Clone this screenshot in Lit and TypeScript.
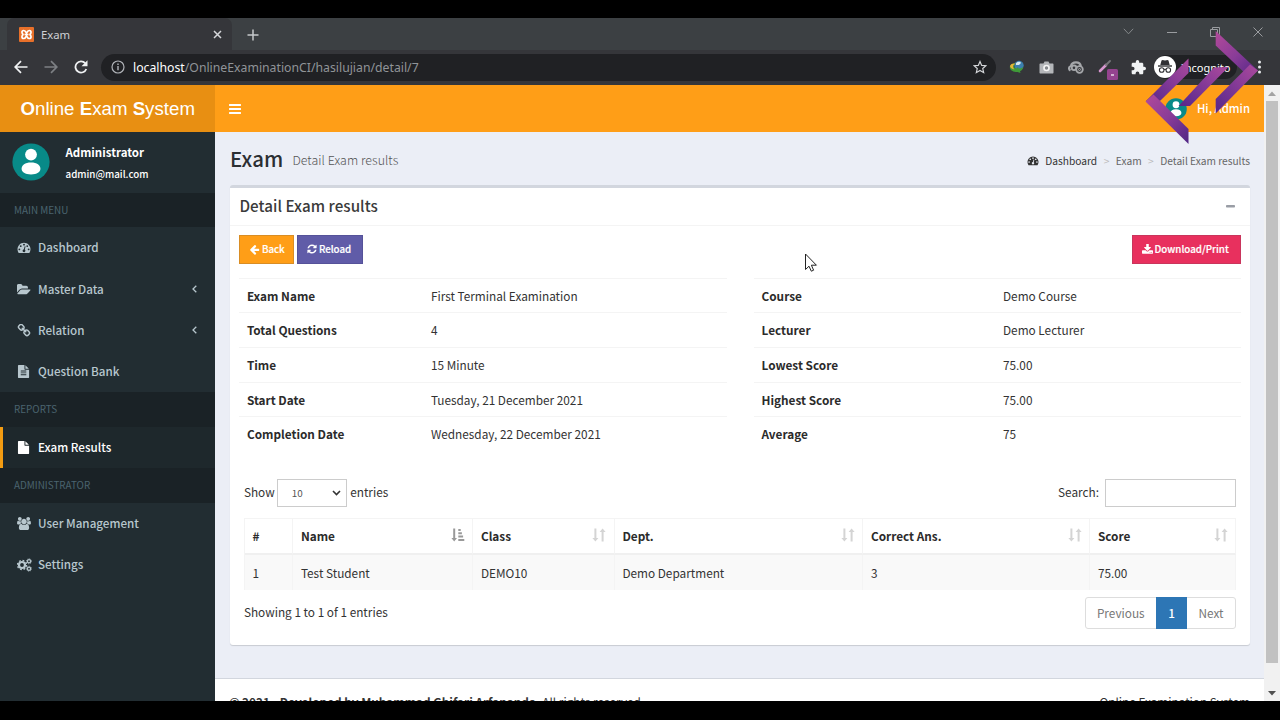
import { LitElement, html, css, svg } from 'lit';
import { customElement } from 'lit/decorators.js';
import { classMap } from 'lit/directives/class-map.js';

const ICONS: Record<string, { box: string; d: string }> = {
  bars: { box: '0 0 1792 1792', d: 'M1664 1344v128q0 26-19 45t-45 19h-1408q-26 0-45-19t-19-45v-128q0-26 19-45t45-19h1408q26 0 45 19t19 45zm0-512v128q0 26-19 45t-45 19h-1408q-26 0-45-19t-19-45v-128q0-26 19-45t45-19h1408q26 0 45 19t19 45zm0-512v128q0 26-19 45t-45 19h-1408q-26 0-45-19t-19-45v-128q0-26 19-45t45-19h1408q26 0 45 19t19 45z' },
  gauge: { box: '0 0 1792 1792', d: 'M384 1152q0-53-37.5-90.5t-90.5-37.5-90.5 37.5-37.5 90.5 37.5 90.5 90.5 37.5 90.5-37.5 37.5-90.5zm192-448q0-53-37.5-90.5t-90.5-37.5-90.5 37.5-37.5 90.5 37.5 90.5 90.5 37.5 90.5-37.5 37.5-90.5zm428 481l101-382q6-26-7.5-48.5t-38.5-29.5-48 6.5-30 39.5l-101 382q-60 5-107 43.5t-63 98.5q-20 77 20 146t117 89 146-20 89-117q16-60-6-117t-72-91zm660-33q0-53-37.5-90.5t-90.5-37.5-90.5 37.5-37.5 90.5 37.5 90.5 90.5 37.5 90.5-37.5 37.5-90.5zm-640-640q0-53-37.5-90.5t-90.5-37.5-90.5 37.5-37.5 90.5 37.5 90.5 90.5 37.5 90.5-37.5 37.5-90.5zm448 192q0-53-37.5-90.5t-90.5-37.5-90.5 37.5-37.5 90.5 37.5 90.5 90.5 37.5 90.5-37.5 37.5-90.5zm320 448q0 261-141 483-19 29-54 29h-1402q-35 0-54-29-141-221-141-483 0-182 71-348t191-286 286-191 348-71 348 71 286 191 191 286 71 348z' },
  folder: { box: '0 0 1856 1792', d: 'M1815 952q0 31-31 66l-336 396q-43 51-120.5 86.5t-143.5 35.5h-1088q-34 0-60.5-13t-26.5-43q0-31 31-66l336-396q43-51 120.5-86.5t143.5-35.5h1088q34 0 60.5 13t26.5 43zm-343-344v160h-832q-94 0-197 47.5t-164 119.5l-337 396-5 6q0-4-.5-12.5t-.5-12.5v-960q0-92 66-158t158-66h320q92 0 158 66t66 158v32h544q92 0 158 66t66 158z' },
  link: { box: '64 64 1664 1664', d: 'M1520 1216q0-40-28-68l-208-208q-28-28-68-28-42 0-72 32 3 3 19 18.5t21.5 21.5 15 19 13 25.5 3.5 27.5q0 40-28 68t-68 28q-15 0-27.5-3.5t-25.5-13-19-15-21.5-21.5-18.5-19q-33 31-33 73 0 40 28 68l206 207q27 27 68 27 40 0 68-26l147-146q28-28 28-67zm-703-705q0-40-28-68l-206-207q-28-28-68-28-39 0-68 27l-147 146q-28 28-28 67 0 40 28 68l208 208q27 27 68 27 42 0 72-31-3-3-19-18.5t-21.5-21.5-15-19-13-25.5-3.5-27.5q0-40 28-68t68-28q15 0 27.5 3.5t25.5 13 19 15 21.5 21.5 18.5 19q33-31 33-73zm895 705q0 120-85 203l-147 146q-83 83-203 83-121 0-204-85l-206-207q-83-83-83-203 0-123 88-209l-88-88q-86 88-208 88-120 0-204-84l-208-208q-84-84-84-204t85-203l147-146q83-83 203-83 121 0 204 85l206 207q83 83 83 203 0 123-88 209l88 88q86-88 208-88 120 0 204 84l208 208q84 84 84 204z' },
  fileText: { box: '128 0 1664 1792', d: 'M1596 476q14 14 28 36h-472v-472q22 14 36 28zm-476 164h544v1056q0 40-28 68t-68 28h-1344q-40 0-68-28t-28-68v-1600q0-40 28-68t68-28h800v544q0 40 28 68t68 28zm160 736v-64q0-14-9-23t-23-9h-704q-14 0-23 9t-9 23v64q0 14 9 23t23 9h704q14 0 23-9t9-23zm0-256v-64q0-14-9-23t-23-9h-704q-14 0-23 9t-9 23v64q0 14 9 23t23 9h704q14 0 23-9t9-23zm0-256v-64q0-14-9-23t-23-9h-704q-14 0-23 9t-9 23v64q0 14 9 23t23 9h704q14 0 23-9t9-23z' },
  file: { box: '128 0 1664 1792', d: 'M1152 512v-472q22 14 36 28l408 408q14 14 28 36h-472zm-128 32q0 40 28 68t68 28h544v1056q0 40-28 68t-68 28h-1344q-40 0-68-28t-28-68v-1600q0-40 28-68t68-28h800v544z' },
  users: { box: '64 0 1920 1792', d: 'M657 896q-162 5-265 128h-134q-82 0-138-40.5t-56-118.5q0-353 124-353 6 0 43.5 21t97.5 42.5 119 21.5q67 0 133-23-5 37-5 66 0 139 81 256zm1071 637q0 120-73 189.5t-194 69.5h-874q-121 0-194-69.5t-73-189.5q0-53 3.5-103.5t14-109 26.5-108.5 43-97.5 62-81 85.5-53.5 111.5-20q10 0 43 21.5t73 48 107 48 135 21.5 135-21.5 107-48 73-48 43-21.5q61 0 111.5 20t85.5 53.5 62 81 43 97.5 26.5 108.5 14 109 3.5 103.5zm-1024-1277q0 106-75 181t-181 75-181-75-75-181 75-181 181-75 181 75 75 181zm704 384q0 159-112.5 271.5t-271.5 112.5-271.5-112.5-112.5-271.5 112.5-271.5 271.5-112.5 271.5 112.5 112.5 271.5zm576 225q0 78-56 118.5t-138 40.5h-134q-103-123-265-128 81-117 81-256 0-29-5-66 66 23 133 23 59 0 119-21.5t97.5-42.5 43.5-21q124 0 124 353zm-128-609q0 106-75 181t-181 75-181-75-75-181 75-181 181-75 181 75 75 181z' },
  left: { box: '0 0 1792 1792', d: 'M1664 896v128q0 53-32.5 90.5t-84.5 37.5h-704l293 294q38 36 38 90t-38 90l-75 76q-37 37-90 37-52 0-91-37l-651-652q-37-37-37-90 0-52 37-91l651-650q38-38 91-38 52 0 90 38l75 74q38 38 38 91t-38 91l-293 293h704q52 0 84.5 37.5t32.5 90.5z' },
  refresh: { box: '64 64 1664 1664', d: 'M1639 1056q0 5-1 7-64 268-268 434.5t-478 166.5q-146 0-282.5-55t-243.5-157l-129 129q-19 19-45 19t-45-19-19-45v-448q0-26 19-45t45-19h448q26 0 45 19t19 45-19 45l-137 137q71 66 161 102t187 36q134 0 250-65t186-179q11-17 53-117 8-23 30-23h192q13 0 22.5 9.5t9.5 22.5zm25-800v448q0 26-19 45t-45 19h-448q-26 0-45-19t-19-45 19-45l138-138q-148-137-349-137-134 0-250 65t-186 179q-11 17-53 117-8 23-30 23h-199q-13 0-22.5-9.5t-9.5-22.5v-7q65-268 270-434.5t480-166.5q146 0 284 55.5t245 156.5l130-129q19-19 45-19t45 19 19 45z' },
  download: { box: '64 64 1664 1664', d: 'M1344 1344q0-26-19-45t-45-19-45 19-19 45 19 45 45 19 45-19 19-45zm256 0q0-26-19-45t-45-19-45 19-19 45 19 45 45 19 45-19 19-45zm128-224v320q0 40-28 68t-68 28h-1472q-40 0-68-28t-28-68v-320q0-40 28-68t68-28h465l135 136q58 56 136 56t136-56l136-136h464q40 0 68 28t28 68zm-325-569q17 41-14 70l-448 448q-18 19-45 19t-45-19l-448-448q-31-29-14-70 17-39 59-39h256v-448q0-26 19-45t45-19h256q26 0 45 19t19 45v448h256q42 0 59 39z' },
};

const icon = (name: string, w = 13, h = w) =>
  name === 'cogs'
    ? html`<svg class="ic" width="15" height="14" viewBox="0 0 15 14" fill="none" stroke="currentColor">
        <circle cx="5" cy="7" r="3" stroke-width="2.2" />
        <circle cx="5" cy="7" r="4.6" stroke-width="1.3" stroke-dasharray="1.8 1.81" />
        <circle cx="12" cy="3.3" r="1.6" stroke-width="1.3" />
        <circle cx="12" cy="3.3" r="2.5" stroke-width=".8" stroke-dasharray="1 .96" />
        <circle cx="12" cy="10.7" r="1.6" stroke-width="1.3" />
        <circle cx="12" cy="10.7" r="2.5" stroke-width=".8" stroke-dasharray="1 .96" />
      </svg>`
    : html`<svg class="ic" width=${w} height=${h} viewBox=${ICONS[name].box} fill="currentColor"><path d=${ICONS[name].d} /></svg>`;

const avatar = (size: number) => html`<svg class="ic" width=${size} height=${size} viewBox="0 0 38 38">
  <circle cx="19" cy="19" r="18.6" fill="#088a88" />
  <circle cx="19" cy="11.6" r="5.9" fill="#fff" />
  <path d="M19 19.4c6 0 9.4 2.6 9.4 6.4 0 3.300-3.400 5.600-9.400 5.600s-9.400-2.300-9.400-5.600c0-3.800 3.400-6.400 9.400-6.400z" fill="#fff" />
</svg>`;

const text = css`
  * { box-sizing: border-box; }
  .ic { display: block; flex: none; }
`;

@customElement('browser-chrome')
class BrowserChrome extends LitElement {
  static styles = [text, css`
    :host { display: block; height: 67px; background: #35363a; font-family: 'Noto Sans', sans-serif; color: #e8eaed; }
    .tabs { height: 32px; display: flex; background: #3c4043; }
    .tab { width: 225px; margin-left: 7px; padding: 0 10px 0 12px; border-radius: 7px 7px 0 0; background: #35363a; display: flex; align-items: center; font-size: 11.3px; }
    .tab span { flex: 1; margin-left: 7px; color: #cfd1d4; }
    .plus { margin: 11px 0 0 15px; }
    .win { margin-left: auto; margin-right: 17px; display: flex; gap: 33px; align-items: center; height: 27px; }
    .bar { height: 34px; display: flex; align-items: center; padding: 0 15px 0 14px; }
    .nav { display: flex; gap: 16px; }
    .url { margin-left: 13px; width: 895px; height: 27px; border-radius: 14px; background: #202124; display: flex; align-items: center; padding: 0 9px 0 10px; font-size: 12.25px; }
    .url .addr { margin-left: 8px; color: #909498; flex: 1; }
    .url b { font-weight: 400; color: #fff; }
    .ext { display: flex; align-items: center; gap: 14px; margin-left: 13px; }
    .ext .wand { margin: 6px -1px 0 0; }
    .incog { margin-left: 8px; width: 83px; height: 24px; border-radius: 12px; background: #202124; display: flex; align-items: center; gap: 5px; font-size: 11px; color: #fff; }
    .dots { margin-left: auto; margin-right: 3px; }
  `];
  render() {
    return html`
      <div class="tabs">
        <div class="tab">
          <svg class="ic" width="15" height="15" viewBox="0 0 15 15"><rect width="15" height="15" rx="1" fill="#e8702a" /><path d="M7.500 6.200C6.500 4 5.500 3.500 4.600 3.500 2.500 3.500 2.300 7 4.600 7.500 2.300 8 2.500 11.500 4.600 11.500c.9 0 1.900-.5 2.900-2.700 1 2.200 2 2.700 2.900 2.700 2.100 0 2.300-3.500 0-4 2.300-.5 2.100-4 0-4-.9 0-1.900.5-2.900 2.700zM5.500 7.500h4" fill="none" stroke="#fff" stroke-width="1.700" /></svg>
          <span>Exam</span>
          <svg class="ic" width="9" height="9" viewBox="0 0 9 9"><path d="M1 1l7 7M8 1l-7 7" stroke="#d5d7da" stroke-width="1.500" /></svg>
        </div>
        <svg class="ic plus" width="12" height="12" viewBox="0 0 12 12"><path d="M6 .5v11M.5 6h11" stroke="#c6c9cc" stroke-width="1.500" /></svg>
        <div class="win">
          <svg class="ic" width="11" height="7" viewBox="0 0 11 7"><path d="M.8.8l4.700 5 4.700-5" fill="none" stroke="#85888b" /></svg>
          <svg class="ic" width="10" height="10" viewBox="0 0 10 10"><path d="M0 5.500h10" stroke="#9a9da0" /></svg>
          <svg class="ic" width="10" height="10" viewBox="0 0 10 10"><path d="M.5 2.500h7v7h-7zM2.500 2.500v-2h7v7h-2" fill="none" stroke="#9a9da0" /></svg>
          <svg class="ic" width="10" height="10" viewBox="0 0 10 10"><path d="M.5.5l9 9M9.500.5l-9 9" stroke="#9a9da0" /></svg>
        </div>
      </div>
      <div class="bar">
        <div class="nav">
          <svg class="ic" width="14" height="14" viewBox="0 0 14 14"><path d="M13.500 7H1.500M7 1.200L1.200 7 7 12.800" fill="none" stroke="#f1f3f4" stroke-width="1.700" /></svg>
          <svg class="ic" width="14" height="14" viewBox="0 0 14 14"><path d="M.5 7h12M7 1.200L12.800 7 7 12.800" fill="none" stroke="#7d8084" stroke-width="1.700" /></svg>
          <svg class="ic" width="14" height="14" viewBox="0 0 14 14"><path d="M12.300 9A5.600 5.600 0 1 1 11.200 3.200" fill="none" stroke="#f1f3f4" stroke-width="1.800" /><path d="M13.500.3v6H7.500z" fill="#f1f3f4" /></svg>
        </div>
        <div class="url">
          <svg class="ic" width="14" height="14" viewBox="0 0 14 14"><circle cx="7" cy="7" r="6" fill="none" stroke="#b0b3b8" stroke-width="1.200" /><path d="M7 6v4.200M7 3.600v1.400" stroke="#b0b3b8" stroke-width="1.400" /></svg>
          <span class="addr"><b>localhost</b>/OnlineExaminationCI/hasilujian/detail/7</span>
          <svg class="ic" width="14" height="14" viewBox="0 0 24 24"><path d="M12 2.500l2.900 6.700 7.300.6-5.500 4.800 1.600 7.100-6.300-3.800-6.300 3.800 1.600-7.100L1.800 9.800l7.300-.6z" fill="none" stroke="#d5d7da" stroke-width="2" /></svg>
        </div>
        <div class="ext">
          <svg class="ic" width="16" height="15" viewBox="0 0 16 15"><circle cx="10" cy="5.500" r="4.700" fill="#3b7fae" /><path d="M7 3c2-1.800 4.500-1.500 5 0l-2 2-3 0z" fill="#d5e6ee" /><path d="M1 6C2.500 3.200 5 3 6.500 4 4 5 4.500 8 7.500 8.500L9 7l.5 1.500c2 0 3.500-.5 4.500-1.500 0 2-1 3.500-3 4.300l.5 1.700-3-1C4 12 0 10 1 6z" fill="#3f9a38" /><path d="M1 6C2.300 3.500 4.800 3 6.500 4 3.500 4.500 3.500 7.500 5.500 9.500 3 9 1 8 1 6z" fill="#e3b436" /></svg>
          <svg class="ic" width="15" height="13" viewBox="0 0 15 13"><path d="M1.500 2.500h3L5.500.5h4l1 2h3c.7 0 1 .4 1 1v8c0 .6-.3 1-1 1h-12c-.7 0-1-.4-1-1v-8c0-.6.3-1 1-1z" fill="#b4b6b9" /><circle cx="7.500" cy="7" r="3.300" fill="#f4f4f4" /><circle cx="7.500" cy="7" r="1.700" fill="#85888c" /></svg>
          <svg class="ic" width="16" height="13" viewBox="0 0 16 13" fill="none" stroke="#a5a7aa"><path d="M2.500 9.500C.5 8.500.5 5.500 3 5 3.500 2 6 1.300 8 1.300s4.500 1.200 4.800 4" stroke-width="2.200" /><circle cx="6" cy="6.800" r="2.300" stroke-width="1.900" /><circle cx="11.500" cy="8.500" r="3.300" stroke-width="1.800" /><circle cx="11.500" cy="8.500" r="1" /></svg>
          <svg class="ic wand" width="20" height="20" viewBox="0 0 20 20"><path d="M2 11L8 5" stroke="#d896cf" stroke-width="2.600" stroke-linecap="round" /><path d="M8 5l4-4" stroke="#77777a" stroke-width="1.800" stroke-linecap="round" /><rect x="9" y="9" width="11" height="11" rx="1.500" fill="#95438f" /><path d="M13 15h3" stroke="#fff" stroke-width="1.200" /></svg>
          <svg class="ic" width="15" height="15" viewBox="1 1 22 22"><path d="M20.500 11H19V7c0-1.100-.9-2-2-2h-4V3.500a2.500 2.500 0 0 0-5 0V5H4c-1.100 0-2 .9-2 2v3.800h1.500a2.700 2.700 0 0 1 0 5.400H2V20c0 1.100.9 2 2 2h3.800v-1.500a2.700 2.700 0 0 1 5.400 0V22H17c1.100 0 2-.9 2-2v-4h1.500a2.500 2.500 0 0 0 0-5z" fill="#f1f3f4" /></svg>
        </div>
        <div class="incog">
          <svg class="ic" width="22" height="22" viewBox="0 0 22 22"><circle cx="11" cy="11" r="11" fill="#fff" /><path d="M7.500 4.500l1-.6 2.500.5 2.500-.5 1 .6 1.200 4.500H6.300z" fill="#303134" /><path d="M4 10h14" stroke="#303134" stroke-width="1.400" /><g fill="none" stroke="#303134" stroke-width="1.100"><circle cx="7.700" cy="14" r="2.300" /><circle cx="14.300" cy="14" r="2.300" /><path d="M10 13.700q1-.8 2 0" /></g></svg>
          <span>Incognito</span>
        </div>
        <svg class="ic dots" width="5" height="14" viewBox="0 0 5 14" fill="#e8eaed"><circle cx="2.500" cy="2" r="1.500" /><circle cx="2.500" cy="7" r="1.500" /><circle cx="2.500" cy="12" r="1.500" /></svg>
      </div>`;
  }
}

type Item = { head?: string; label?: string; icon?: string; tree?: boolean; active?: boolean };
const MENU: Item[] = [
  { head: 'MAIN MENU' },
  { label: 'Dashboard', icon: 'gauge' },
  { label: 'Master Data', icon: 'folder', tree: true },
  { label: 'Relation', icon: 'link', tree: true },
  { label: 'Question Bank', icon: 'fileText' },
  { head: 'REPORTS' },
  { label: 'Exam Results', icon: 'file', active: true },
  { head: 'ADMINISTRATOR' },
  { label: 'User Management', icon: 'users' },
  { label: 'Settings', icon: 'cogs' },
];

@customElement('side-bar')
class SideBar extends LitElement {
  static styles = [text, css`
    :host { display: block; width: 215.4px; flex: none; background: #222d32; font: 500 11.65px/16px 'Noto Sans CJK SC', sans-serif; color: #b8c7ce; }
    .logo { height: 47px; background: #e88f12; color: #fff; font: 18.7px/47px 'Liberation Sans', Arial, sans-serif; text-align: center; white-space: nowrap; }
    .user { height: 60.5px; padding: 0 11.5px; display: flex; align-items: center; gap: 16px; color: #fff; }
    .name { font-weight: 700; font-size: 11.5px; margin-bottom: 7px; line-height: 15px; }
    .mail { font-weight: 500; font-size: 9.8px; line-height: 15px; }
    .user > div { padding-top: 2px; }
    .head { height: 34.6px; padding-left: 14px; background: #1a2226; color: #4b646f; font: 400 9.9px/35px 'Noto Sans CJK SC', sans-serif; }
    .item { height: 41.3px; padding: 0 18.5px 0 13.5px; border-left: 3px solid transparent; display: flex; align-items: center; }
    .item .slot { width: 21.5px; display: flex; }
    .item span { flex: 1; margin-top: -1px; }
    .active { background: #1e282c; border-left-color: #f39c12; color: #fff; }
  `];
  render() {
    return html`
      <div class="logo"><b>O</b>nline <b>E</b>xam <b>S</b>ystem</div>
      <div class="user">${avatar(38)}<div><div class="name">Administrator</div><div class="mail">admin@mail.com</div></div></div>
      ${MENU.map((m) => m.head
        ? html`<div class="head">${m.head}</div>`
        : html`<div class=${classMap({ item: true, active: !!m.active })}>
            <div class="slot">${icon(m.icon!, 14, 13)}</div><span>${m.label}</span>
            ${m.tree ? html`<svg class="ic" width="5" height="8" viewBox="0 0 5 8"><path d="M4.300.7L1 4l3.300 3.300" fill="none" stroke="currentColor" stroke-width="1.300" /></svg>` : ''}
          </div>`)}`;
  }
}

const LEFT = [['Exam Name', 'First Terminal Examination'], ['Total Questions', '4'], ['Time', '15 Minute'], ['Start Date', 'Tuesday, 21 December 2021'], ['Completion Date', 'Wednesday, 22 December 2021']];
const RIGHT = [['Course', 'Demo Course'], ['Lecturer', 'Demo Lecturer'], ['Lowest Score', '75.00'], ['Highest Score', '75.00'], ['Average', '75']];
const COLS = [['#', '1'], ['Name', 'Test Student'], ['Class', 'DEMO10'], ['Dept.', 'Demo Department'], ['Correct Ans.', '3'], ['Score', '75.00']];

@customElement('exam-detail')
class ExamDetail extends LitElement {
  static styles = [text, css`
    :host { display: flex; flex-direction: column; flex: 1; min-width: 0; background: #ebeef6; font: 400 11.8px/17px 'Noto Sans CJK SC', sans-serif; color: #333; }
    .top { height: 47px; flex: none; background: #ff9e17; color: #fff; display: flex; align-items: center; padding: 0 14px 0 12.5px; }
    .top .me { margin-left: auto; display: flex; align-items: center; gap: 10px; font-weight: 500; font-size: 11.4px; }
    .crumbs { height: 53px; flex: none; padding: 0 14px 2px 14.5px; display: flex; align-items: center; }
    h1 { margin: 0; font-size: 20.4px; font-weight: 500; line-height: 24px; color: #2b2f33; letter-spacing: .15px; }
    .sub { margin: 5px 0 0 9px; font-size: 12.4px; font-weight: 300; color: #555; letter-spacing: .05px; }
    .trail { margin-left: auto; margin-top: 5px; display: flex; align-items: center; font-size: 10.2px; color: #666; white-space: pre; }
    .trail b { font-weight: 400; color: #333; margin-left: 6px; }
    .trail i { font-style: normal; color: #bbb; margin: 0 6.5px; }
    .trail .ic { color: #333; }
    .box { height: 460px; flex: none; margin: 0 14px 0 14.5px; background: #fff; border-top: 3px solid #d2d6de; border-radius: 3px; box-shadow: 0 1px 1px rgba(0,0,0,.15); }
    .title { height: 38px; padding: 0 15px 0 9.5px; display: flex; align-items: center; justify-content: space-between; border-bottom: 1px solid #f4f4f4; font-size: 15.2px; font-weight: 500; color: #3a3a3a; }
    .title span { margin-top: -3px; letter-spacing: .05px; }
    .body { padding: 9px 9.5px 0 9px; }
    .btns { display: flex; gap: 3px; height: 28.5px; }
    .btn { display: flex; align-items: center; gap: 2px; padding: 0 9px; font-size: 9.75px; font-weight: 500; -webkit-text-stroke: .2px #fff; color: #fff; border: 1px solid; white-space: nowrap; }
    .back { background: #ff9e17; border-color: #d98d24; width: 55px; }
    .reload { background: #605ca8; border-color: #555299; width: 66px; }
    .down { background: #e8305e; border-color: #c9355c; width: 109px; margin-left: auto; }
    .pair { display: grid; grid-template-columns: 488px 487px; justify-content: space-between; margin-top: 14px; }
    .row { display: flex; height: 34.7px; line-height: 33px; border-top: 1px solid #f4f4f4; padding-left: 8px; }
    .row b { width: 184px; color: #2b2b2b; }
    .right .row b { width: 241.5px; }
    .ctl { display: flex; height: 28px; margin: 28px 4.5px 0 5px; line-height: 25px; white-space: pre; }
    .sel { width: 70.5px; height: 28px; border: 1px solid #ccc; margin: 0 3px 0 2px; padding: 1px 5px 0 14px; display: flex; align-items: center; justify-content: space-between; font-size: 9.9px; color: #555; }
    .search { width: 131px; height: 28px; border: 1px solid #ccc; margin-left: 6px; padding: 0; outline: 0; }
    .find { display: flex; margin-left: auto; }
    .grid { margin: 11px 4.5px 0 5px; display: grid; grid-template-columns: 48.5px 180px 141.5px 248.5px 227px 1fr; border: 1px solid #f4f4f4; border-right: 0; border-bottom: 0; }
    .th, .td { border-right: 1px solid #f4f4f4; padding: 0 7.5px; display: flex; align-items: center; justify-content: space-between; }
    .th { height: 36px; border-bottom: 2px solid #f0f0f0; font-weight: 700; color: #2b2b2b; padding-bottom: 1px; }
    .td { height: 35px; background: #f9f9f9; }
    .foot { display: flex; justify-content: space-between; margin: 7.5px 4.5px 0 5px; line-height: 29px; }
    .pages { display: flex; height: 32px; border: 1px solid #ddd; border-radius: 3px; color: #777; line-height: 30px; }
    .pages span { width: 48px; text-align: center; }
    .pages .prev { width: 70.5px; }
    .pages .on { margin: -1px 0; background: #2d76b5; color: #fff; line-height: 32px; width: 31px; font-weight: 500; }
    footer { margin-top: 33px; flex: 1; border-top: 1px solid #d2d6de; background: #fff; padding: 14px 14px 0; display: flex; justify-content: space-between; white-space: pre; min-height: 0; overflow: hidden; }
  `];
  private rows(list: string[][]) {
    return list.map(([k, v]) => html`<div class="row"><b>${k}</b><span>${v}</span></div>`);
  }
  private sort(i: number) {
    if (i === 0) return '';
    return i === 1
      ? html`<svg class="ic" width="14" height="14" viewBox="0 0 14 14" fill="#999"><path d="M2.200.5h2v9.500H6L3.200 13.500.400 10h1.800zM7.300 1h2.400v2H7.300zM7.300 4.300h3.600v2H7.300zM7.300 7.600h4.800v2H7.300zM7.300 10.900h6v2h-6z" /></svg>`
      : html`<svg class="ic" width="14" height="14" viewBox="0 0 14 14" fill="#d4d4d4"><path d="M2.400.5h2v9.500h2L3.400 13.500.400 10h2zM9.600 13.500h2V4h2L10.600.5 7.600 4h2z" /></svg>`;
  }
  render() {
    return html`
      <div class="top">${icon('bars', 14)}<div class="me">${avatar(22)}<span>Hi, Admin</span></div></div>
      <div class="crumbs">
        <h1>Exam</h1><span class="sub">Detail Exam results</span>
        <div class="trail">${icon('gauge', 12, 11)}<b>Dashboard</b><i>&gt;</i>Exam<i>&gt;</i>Detail Exam results</div>
      </div>
      <div class="box">
        <div class="title"><span>Detail Exam results</span><svg class="ic" width="9" height="3"><rect width="9" height="2.500" rx=".8" fill="#999da5" /></svg></div>
        <div class="body">
          <div class="btns">
            <div class="btn back">${icon('left', 11)}Back</div>
            <div class="btn reload">${icon('refresh', 10)}Reload</div>
            <div class="btn down">${icon('download', 11)}Download/Print</div>
          </div>
          <div class="pair"><div>${this.rows(LEFT)}</div><div class="right">${this.rows(RIGHT)}</div></div>
          <div class="ctl"><span>Show</span><div class="sel">10<svg class="ic" width="9" height="6" viewBox="0 0 9 6"><path d="M1 1l3.500 3.500L8 1" fill="none" stroke="#333" stroke-width="1.600" /></svg></div><span>entries</span><label class="find">Search:<input class="search" /></label></div>
          <div class="grid">
            ${COLS.map(([h], i) => html`<div class="th">${h}${this.sort(i)}</div>`)}
            ${COLS.map(([, v]) => html`<div class="td">${v}</div>`)}
          </div>
          <div class="foot"><span>Showing 1 to 1 of 1 entries</span>
            <div class="pages"><span class="prev">Previous</span><span class="on">1</span><span>Next</span></div></div>
        </div>
      </div>
      <footer><span><b>© 2021 - Developed by Muhammad Ghifari Arfananda.</b> All rights reserved.</span><span>Online Examination System</span></footer>`;
  }
}

@customElement('app-root')
class AppRoot extends LitElement {
  static styles = [text, css`
    :host { display: block; box-sizing: border-box; position: relative; width: 1280px; height: 720px; overflow: hidden; background: #000; padding: 18px 0 19px; }
    .page { display: flex; height: 616px; overflow: hidden; }
    .scroll { width: 16px; flex: none; background: #f1f1f1; display: flex; flex-direction: column; align-items: center; justify-content: space-between; padding: 6px 0 5px; }
    .thumb { width: 12px; height: 562px; background: #c1c1c1; margin-bottom: 23px; }
    .mark { position: absolute; left: 1144px; top: 28px; }
    .cursor { position: absolute; left: 804px; top: 253px; }
  `];
  render() {
    const band = (pts: string, id: string) => svg`<polygon points=${pts} fill="url(#${id})" />`;
    return html`
      <browser-chrome></browser-chrome>
      <div class="page">
        <side-bar></side-bar>
        <exam-detail></exam-detail>
        <div class="scroll">
          <svg class="ic" width="8" height="5"><path d="M0 5l4-4.500L8 5z" fill="#a3a3a3" /></svg>
          <div class="thumb"></div>
          <svg class="ic" width="8" height="5"><path d="M0 0l4 4.500L8 0z" fill="#505050" /></svg>
        </div>
      </div>
      <svg class="ic cursor" width="14" height="20" viewBox="0 0 14 20"><path d="M1.500 1v15.500l3.500-3.300 2.300 5 2.300-1-2.200-5h5z" fill="#fff" stroke="#222" /></svg>
      <svg class="ic mark" width="116" height="118" viewBox="1144 28 116 118">
        <defs>
          <linearGradient id="up" x1="1" y1="0" x2="0" y2="1"><stop offset="0" stop-color="#ab4a9c" /><stop offset=".4" stop-color="#8a3c98" /><stop offset="1" stop-color="#55278a" /></linearGradient>
          <linearGradient id="dn" x1="0" y1="0" x2="1" y2="1"><stop offset="0" stop-color="#b24a9a" /><stop offset=".5" stop-color="#8a3c98" /><stop offset="1" stop-color="#4f2585" /></linearGradient>
        </defs>
        ${band('1188.500,58.500 1188.500,73 1160.500,100.500 1153,103 1146,101', 'up')}
        ${band('1145.500,101.500 1153.500,94.500 1188.500,129 1188.500,144', 'dn')}
        ${band('1214,67.500 1228.500,67 1190,106 1178.500,106', 'up')}
        ${band('1215.700,31 1258,70.500 1249,77 1215.700,45.500', 'dn')}
        ${band('1258,70.500 1250,64.500 1215.700,99 1215.700,113.500', 'up')}
      </svg>`;
  }
}
